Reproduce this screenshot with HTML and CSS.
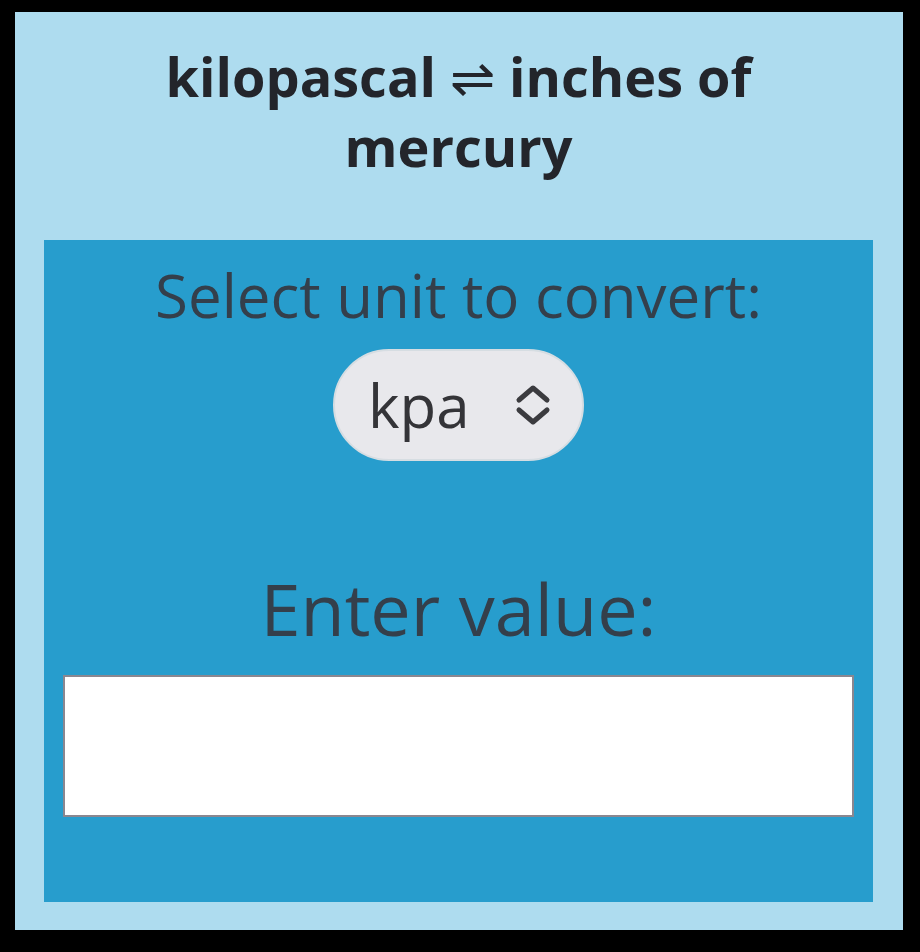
FILE: index.html
```html
<!DOCTYPE html>
<html lang="en">
<head>
    <meta charset="UTF-8">
    <meta name="viewport" content="width=device-width, initial-scale=1.0">
    <title>Pressure Converter</title>
    <link rel="stylesheet" href="styles.css">
</head>
<body>

    <div class="converter">
        <h1 class="title">kilopascal <span class="swap">&#8652;</span> inches of mercury</h1>

        <div class="panel">
            <label for="unit" class="unit-label">Select unit to convert:</label>
            <div class="select-wrap">
                <select id="unit" name="unit">
                    <option value="kpa">kpa</option>
                    <option value="inhg">inHg</option>
                </select>
                <svg class="chevrons" width="38" height="44" viewBox="0 0 38 44">
                    <path d="M5 17 L19 5 L33 17" fill="none" stroke="#3b3b3f" stroke-width="5" stroke-linecap="round" stroke-linejoin="round"/>
                    <path d="M5 27 L19 39 L33 27" fill="none" stroke="#3b3b3f" stroke-width="5" stroke-linecap="round" stroke-linejoin="round"/>
                </svg>
            </div>

            <label for="value" class="value-label">Enter value:</label>
            <input type="text" id="value" class="value-input">
        </div>
    </div>

</body>
</html>
```

FILE: styles.css
```css
body {
    margin: 0;
    padding: 12px 17px 22px 15px;
    background-color: #000000;
    font-family: 'Open Sans', sans-serif;
}

/* Outer light box */
.converter {
    background-color: #aedcef;
    padding: 29px 30px 28px 29px;
    height: 918px;
    box-sizing: border-box;
    display: flex;
    flex-direction: column;
}

.title {
    margin: 0 0 59px;
    text-align: center;
    font-size: 54px;
    line-height: 70px;
    font-weight: bold;
    color: #23252b;
    padding: 0 60px;
}

.swap {
    font-family: 'DejaVu Sans', sans-serif;
    font-weight: 200;
    line-height: 0;
}

/* Blue panel */
.panel {
    flex: 1;
    background-color: #279dcd;
    padding: 0 19px;
    display: flex;
    flex-direction: column;
    align-items: center;
}

.unit-label {
    margin-top: 15px;
    font-size: 60px;
    line-height: 80px;
    color: #343f4b;
}

.select-wrap {
    position: relative;
    margin-top: 14px;
}

select {
    appearance: none;
    -webkit-appearance: none;
    width: 251px;
    height: 112px;
    border: 2px solid #d6dde2;
    border-radius: 56px;
    background-color: #e8e8ec;
    padding: 0 0 0 33px;
    font-family: 'Open Sans', sans-serif;
    font-size: 60px;
    color: #343438;
}

.chevrons {
    position: absolute;
    right: 32px;
    top: 34px;
    pointer-events: none;
}

.value-label {
    margin-top: 102px;
    font-size: 72px;
    line-height: 90px;
    color: #343f4b;
}

.value-input {
    margin-top: 22px;
    width: 100%;
    height: 142px;
    box-sizing: border-box;
    border: 2px solid #8a8790;
    background-color: #ffffff;
    font-size: 40px;
}
```
